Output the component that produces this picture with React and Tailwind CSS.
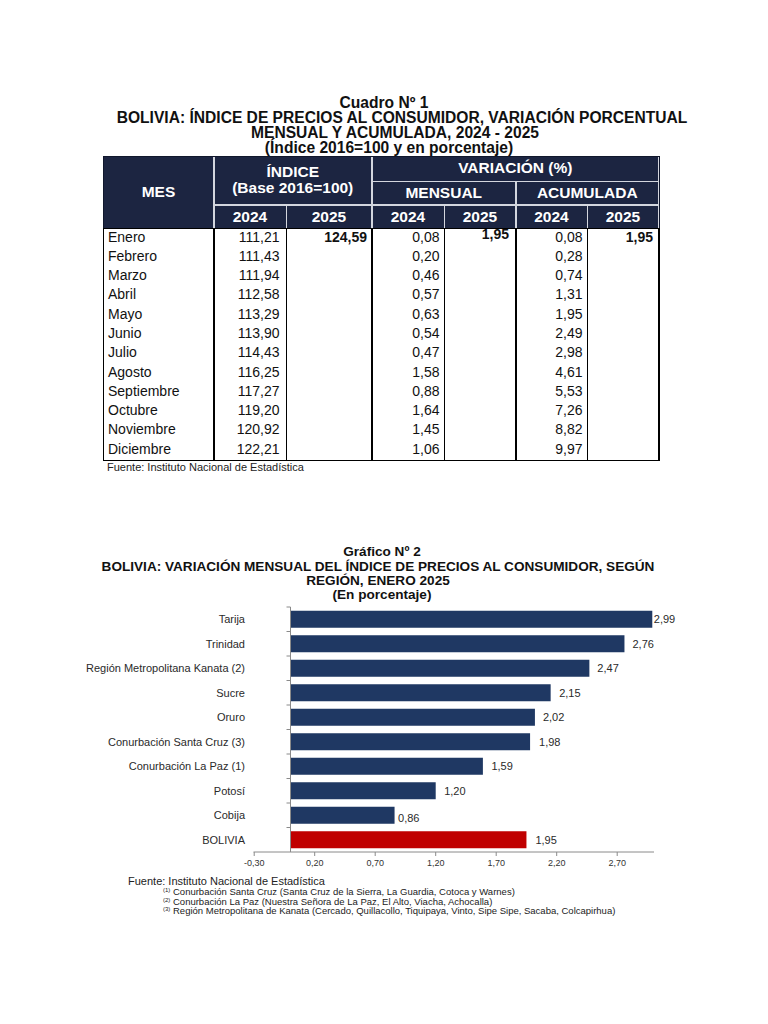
const months = [
  ["Enero", "111,21", "0,08", "0,08"],
  ["Febrero", "111,43", "0,20", "0,28"],
  ["Marzo", "111,94", "0,46", "0,74"],
  ["Abril", "112,58", "0,57", "1,31"],
  ["Mayo", "113,29", "0,63", "1,95"],
  ["Junio", "113,90", "0,54", "2,49"],
  ["Julio", "114,43", "0,47", "2,98"],
  ["Agosto", "116,25", "1,58", "4,61"],
  ["Septiembre", "117,27", "0,88", "5,53"],
  ["Octubre", "119,20", "1,64", "7,26"],
  ["Noviembre", "120,92", "1,45", "8,82"],
  ["Diciembre", "122,21", "1,06", "9,97"],
];

const regions = [
  ["Tarija", 2.99, 1.5],
  ["Trinidad", 2.76, 8],
  ["Región Metropolitana Kanata (2)", 2.47, 8],
  ["Sucre", 2.15, 8.5],
  ["Oruro", 2.02, 8],
  ["Conurbación Santa Cruz (3)", 1.98, 9],
  ["Conurbación La Paz (1)", 1.59, 8.5],
  ["Potosí", 1.2, 8.5],
  ["Cobija", 0.86, 3.5],
  ["BOLIVIA", 1.95, 9],
];

const ticks = [-0.3, 0.2, 0.7, 1.2, 1.7, 2.2, 2.7];

const cols = "grid grid-cols-[109px_71px_84px_71px_70px_70px_70px] gap-x-[1.5px]";

function Chart() {
  const x0 = 290.5;
  const k = 121;
  const top = 608;
  const step = 24.5;
  const fmt = (v) => v.toFixed(2).replace(".", ",");

  return (
    <svg
      width="610"
      height="270"
      viewBox="80 605 610 270"
      className="ml-[80px] block"
      fontFamily="'Liberation Sans', Arial, sans-serif"
    >
      {regions.map(([name, v, gap], i) => {
        const y = top + i * step + 3.75;
        const cy = y + 8.5;
        const end = x0 + v * k;
        return (
          <g key={name}>
            <rect
              x={x0}
              y={y}
              width={v * k}
              height="17"
              fill={name === "BOLIVIA" ? "#c00000" : "#1f3863"}
            />
            <text x="245" y={cy + 4} fontSize="11" fill="#2a2a2a" textAnchor="end">
              {name}
            </text>
            <text
              x={end + gap}
              y={cy + 4 + (name === "Cobija" ? 3 : 0)}
              fontSize="11"
              fill="#2a2a2a"
            >
              {fmt(v)}
            </text>
          </g>
        );
      })}

      {/* y axis */}
      <line x1={x0} y1={top} x2={x0} y2="853" stroke="#8a8a8a" strokeWidth="1" />
      {regions.map((_, i) => (
        <line
          key={i}
          x1={x0 - 4}
          y1={top + i * step}
          x2={x0}
          y2={top + i * step}
          stroke="#8a8a8a"
          strokeWidth="1"
        />
      ))}

      {/* x axis */}
      <line x1="253.5" y1="853" x2="654" y2="853" stroke="#8a8a8a" strokeWidth="1" />
      {ticks.map((t) => {
        const x = x0 + t * k;
        return (
          <g key={t}>
            <line x1={x} y1="853" x2={x} y2="857" stroke="#8a8a8a" strokeWidth="1" />
            <text x={x} y="867" fontSize="9" fill="#333" textAnchor="middle">
              {fmt(t)}
            </text>
          </g>
        );
      })}
    </svg>
  );
}

export default function App() {
  return (
    <div className="min-h-[1024px] w-[768px] bg-white font-['Liberation_Sans',Arial,sans-serif] text-[#111]">
      {/* Cuadro 1 */}
      <div className="pt-[95px] text-center text-[15.6px] font-bold leading-[15px]">
        <div>Cuadro Nº 1</div>
        <div className="pl-[36px]">BOLIVIA: ÍNDICE DE PRECIOS AL CONSUMIDOR, VARIACIÓN PORCENTUAL</div>
        <div className="pl-[22px]">MENSUAL Y ACUMULADA, 2024 - 2025</div>
        <div className="pl-[10px]">(Índice 2016=100 y en porcentaje)</div>
      </div>

      <div className="ml-[103px] mt-[0.5px] w-[557px]">
        <div
          className={`${cols} grid-rows-[24px_22px_22px] gap-y-[1.5px] border-[1.5px] border-b-0 border-[#10172c] bg-[#d3d6de] text-[15.5px] font-bold text-white`}
        >
          <div className="row-span-3 flex items-center justify-center bg-[#1c2541]">MES</div>
          <div className="col-span-2 row-span-2 flex flex-col items-center justify-center bg-[#1c2541] leading-[16px]">
            <span>ÍNDICE</span>
            <span>(Base 2016=100)</span>
          </div>
          <div className="col-span-4 flex items-center justify-center bg-[#1c2541] pb-[2px]">VARIACIÓN (%)</div>
          <div className="col-span-2 flex items-center justify-center bg-[#1c2541]">MENSUAL</div>
          <div className="col-span-2 flex items-center justify-center bg-[#1c2541]">ACUMULADA</div>
          {["2024", "2025", "2024", "2025", "2024", "2025"].map((y, i) => (
            <div key={i} className="flex items-center justify-center bg-[#1c2541]">
              {y}
            </div>
          ))}
        </div>

        <div
          className={`${cols} auto-rows-[19.3px] border-[1.5px] border-black bg-black text-[14px] leading-[17px]`}
        >
          {months.map(([m, idx, men, acu], r) => [
            <div key={r + "a"} className="bg-white pl-[4px]">{m}</div>,
            <div key={r + "b"} className="bg-white pr-[6px] text-right">{idx}</div>,
            <div key={r + "c"} className="bg-white pr-[4px] text-right font-bold">
              {r === 0 ? "124,59" : ""}
            </div>,
            <div key={r + "d"} className="bg-white pr-[4px] text-right">{men}</div>,
            <div key={r + "e"} className="bg-white pr-[6px] text-right font-bold">
              {r === 0 ? <span className="relative -top-[3px]">1,95</span> : ""}
            </div>,
            <div key={r + "f"} className="bg-white pr-[4px] text-right">{acu}</div>,
            <div key={r + "g"} className="bg-white pr-[5px] text-right font-bold">
              {r === 0 ? "1,95" : ""}
            </div>,
          ])}
        </div>
        <div className="pl-[4px] text-[11px] leading-[13px] text-[#222]">
          Fuente: Instituto Nacional de Estadística
        </div>
      </div>

      {/* Gráfico 2 */}
      <div className="mt-[71px] pr-[12px] text-center text-[13.6px] font-bold leading-[14.5px]">
        <div className="pl-[8px]">Gráfico Nº 2</div>
        <div>BOLIVIA: VARIACIÓN MENSUAL DEL ÍNDICE DE PRECIOS AL CONSUMIDOR, SEGÚN</div>
        <div>REGIÓN, ENERO 2025</div>
        <div className="pl-[8px] leading-[12.5px]">(En porcentaje)</div>
      </div>

      <div className="mt-[3px]">
        <Chart />
      </div>

      <div className="ml-[128px] mt-[2px] text-[9.5px] leading-[9.5px] text-[#222]">
        <div className="text-[11px] leading-[11px]">Fuente: Instituto Nacional de Estadística</div>
        <div className="pl-[35px]">
          <div>
            <sup className="text-[6px]">(1)</sup> Conurbación Santa Cruz (Santa Cruz de la Sierra, La Guardia, Cotoca y Warnes)
          </div>
          <div>
            <sup className="text-[6px]">(2)</sup> Conurbación La Paz (Nuestra Señora de La Paz, El Alto, Viacha, Achocalla)
          </div>
          <div>
            <sup className="text-[6px]">(3)</sup> Región Metropolitana de Kanata (Cercado, Quillacollo, Tiquipaya, Vinto, Sipe Sipe, Sacaba, Colcapirhua)
          </div>
        </div>
      </div>
    </div>
  );
}
